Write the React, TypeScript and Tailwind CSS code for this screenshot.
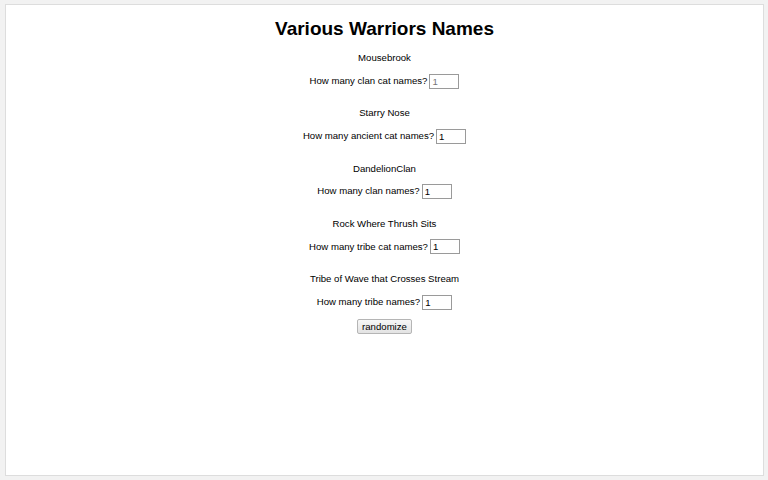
const groups = [
  { name: 'Mousebrook', question: 'How many clan cat names?' },
  { name: 'Starry Nose', question: 'How many ancient cat names?' },
  { name: 'DandelionClan', question: 'How many clan names?' },
  { name: 'Rock Where Thrush Sits', question: 'How many tribe cat names?' },
  { name: 'Tribe of Wave that Crosses Stream', question: 'How many tribe names?' },
];

export default function App() {
  return (
    <div className="w-[768px] h-[480px] bg-[#f2f2f2] pt-[4px] pl-[5px] pr-[4px] pb-[4px] font-['Liberation_Sans',Arial,sans-serif] text-black">
      <div className="h-full border border-[#dddddd] bg-white flex flex-col items-center pt-[13px]">
        <h1 className="h-[22px] leading-[22px] text-[19px] font-bold">Various Warriors Names</h1>

        <div className="mt-[12px] flex flex-col items-center gap-[18.3px]">
          {groups.map((g, i) => (
            <div key={g.name} className="flex flex-col items-center">
              <p className="h-[12px] leading-[12px] text-[9.6px]">{g.name}</p>
              <div className="mt-[9px] h-[16px] flex items-center gap-[2px] text-[9.6px]">
                <span>{g.question}</span>
                <input
                  type="text"
                  defaultValue="1"
                  className={
                    'w-[30px] h-[15px] border border-[#9a9a9a] bg-white px-[2px] text-[9.6px] leading-[13px] outline-none ' +
                    (i === 0 ? 'text-[#777777]' : 'text-black')
                  }
                />
              </div>
            </div>
          ))}
        </div>

        <button className="mt-[9px] w-[55px] h-[15px] border border-[#b5b5b5] rounded-[2px] bg-gradient-to-b from-[#f7f7f7] to-[#e3e3e3] text-[9.6px] leading-[13px] text-black">
          randomize
        </button>
      </div>
    </div>
  );
}
